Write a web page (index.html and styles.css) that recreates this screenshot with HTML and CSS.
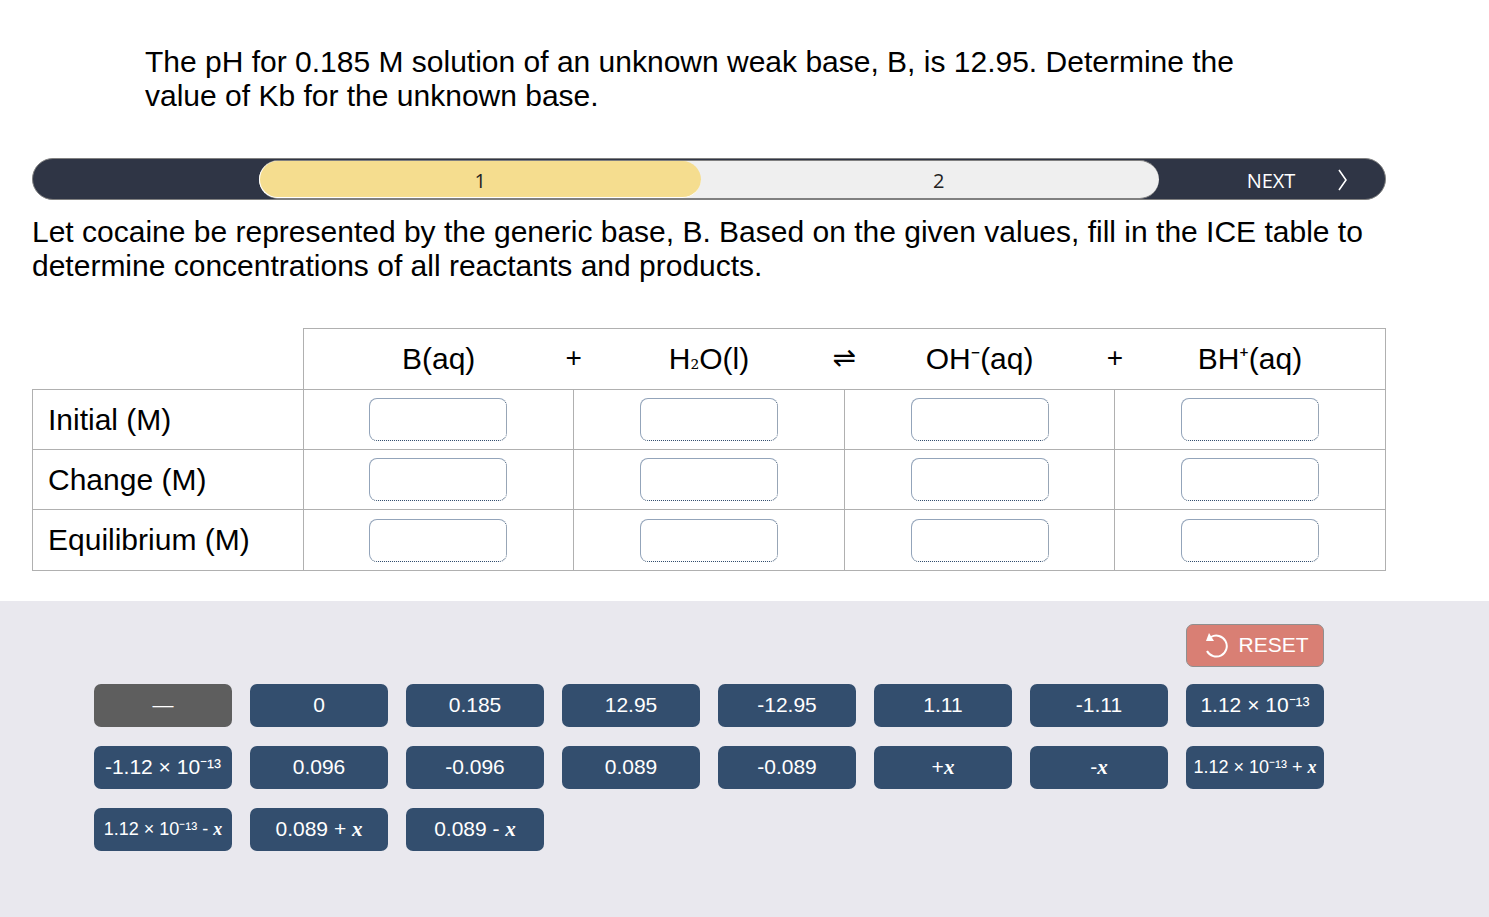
FILE: index.html
```html
<!DOCTYPE html>
<html lang="en">
<head>
  <meta charset="UTF-8">
  <title>ICE Table</title>
  <link rel="stylesheet" href="styles.css">
</head>
<body>

  <main class="problem">
    <p class="question">The pH for 0.185 M solution of an unknown weak base, B, is 12.95. Determine the value of Kb for the unknown base.</p>

    <nav class="progress">
      <div class="steps">
        <button class="step active" type="button">1</button>
        <button class="step" type="button">2</button>
      </div>
      <button class="next" type="button">
        NEXT
        <svg width="12" height="22" viewBox="0 0 12 22"><path d="M2 1 L9 11 L2 21" fill="none" stroke="#fff" stroke-width="1.6"/></svg>
      </button>
    </nav>

    <p class="instructions">Let cocaine be represented by the generic base, B. Based on the given values, fill in the ICE table to determine concentrations of all reactants and products.</p>

    <table class="ice">
      <thead>
        <tr>
          <td class="corner"></td>
          <th>B(aq)<span class="operator">+</span></th>
          <th>H<span class="sub">₂</span>O(l)<span class="operator arrows">⇌</span></th>
          <th>OH<span class="charge">⁻</span>(aq)<span class="operator">+</span></th>
          <th>BH<span class="charge">⁺</span>(aq)</th>
        </tr>
      </thead>
      <tbody>
        <tr>
          <th>Initial (M)</th>
          <td><input class="slot" type="text" aria-label="Initial B"></td>
          <td><input class="slot" type="text" aria-label="Initial H2O"></td>
          <td><input class="slot" type="text" aria-label="Initial OH-"></td>
          <td><input class="slot" type="text" aria-label="Initial BH+"></td>
        </tr>
        <tr>
          <th>Change (M)</th>
          <td><input class="slot" type="text" aria-label="Change B"></td>
          <td><input class="slot" type="text" aria-label="Change H2O"></td>
          <td><input class="slot" type="text" aria-label="Change OH-"></td>
          <td><input class="slot" type="text" aria-label="Change BH+"></td>
        </tr>
        <tr>
          <th>Equilibrium (M)</th>
          <td><input class="slot" type="text" aria-label="Equilibrium B"></td>
          <td><input class="slot" type="text" aria-label="Equilibrium H2O"></td>
          <td><input class="slot" type="text" aria-label="Equilibrium OH-"></td>
          <td><input class="slot" type="text" aria-label="Equilibrium BH+"></td>
        </tr>
      </tbody>
    </table>
  </main>

  <section class="tray">
    <div class="actions">
      <button class="tile reset" type="button">
        <svg width="24" height="26" viewBox="0 0 24 26">
          <path d="M6 5 A10.500 10.500 0 1 1 2 19" fill="none" stroke="#fff" stroke-width="2"/>
          <path d="M4 1 L9 9 L1 9 Z" fill="#fff"/>
        </svg>
        RESET
      </button>
    </div>
    <div class="tiles">
      <button class="tile blank" type="button">—</button>
      <button class="tile" type="button">0</button>
      <button class="tile" type="button">0.185</button>
      <button class="tile" type="button">12.95</button>
      <button class="tile" type="button">-12.95</button>
      <button class="tile" type="button">1.11</button>
      <button class="tile" type="button">-1.11</button>
      <button class="tile" type="button">1.12 × 10⁻¹³</button>
      <button class="tile" type="button">-1.12 × 10⁻¹³</button>
      <button class="tile" type="button">0.096</button>
      <button class="tile" type="button">-0.096</button>
      <button class="tile" type="button">0.089</button>
      <button class="tile" type="button">-0.089</button>
      <button class="tile" type="button">+<i>x</i></button>
      <button class="tile" type="button">-<i>x</i></button>
      <button class="tile small" type="button">1.12 × 10⁻¹³ + <i>x</i></button>
      <button class="tile small" type="button">1.12 × 10⁻¹³ - <i>x</i></button>
      <button class="tile" type="button">0.089 + <i>x</i></button>
      <button class="tile" type="button">0.089 - <i>x</i></button>
    </div>
  </section>

</body>
</html>
```

FILE: styles.css
```css
* {
  box-sizing: border-box;
}

body {
  margin: 0;
  min-height: 100vh;
  display: flex;
  flex-direction: column;
  font-family: Arial, "Liberation Sans", sans-serif;
  font-size: 30px;
  line-height: 34px;
  color: #000;
  background-color: #fff;
}

button {
  font-family: inherit;
  cursor: pointer;
}

.problem {
  padding: 45px 103px 30px 32px;
}

.question {
  margin: 0 113px 45px;
}

.progress {
  display: grid;
  grid-template-columns: 226px 1fr 226px;
  height: 42px;
  border: 1px solid #808080;
  border-radius: 21px;
  background-color: #2f3545;
  overflow: hidden;
}

.steps {
  grid-column: 2;
  display: flex;
  gap: 18px;
  margin-top: 1px;
  border: 1px solid #808080;
  border-width: 1px 0;
  border-radius: 20px;
  background-color: #efefef;
}

.step,
.next {
  border: none;
  padding: 2px 0 0;
  font-family: "Open Sans", sans-serif;
  font-size: 20px;
  background: none;
}

.step {
  flex: 1;
  border-radius: 19px;
  color: #222;
}

.step.active {
  border: 1px solid #fff;
  border-width: 0 0 1px 1px;
  background-color: #f5dd8f;
}

.next {
  display: flex;
  align-items: center;
  justify-content: center;
  gap: 42px;
  padding-left: 52px;
  font-weight: 500;
  color: #fff;
}

.instructions {
  margin: 15px 0 45px;
}

.ice {
  width: 100%;
  table-layout: fixed;
  border-collapse: collapse;
}

.ice tr {
  height: 60px;
}

.ice thead tr,
.ice tr:last-child {
  height: 61px;
}

.ice th {
  position: relative;
  padding: 0;
  font-weight: normal;
  border: 1px solid #b0b0b0;
}

.ice td {
  padding: 0;
  text-align: center;
  border: 1px solid #b0b0b0;
}

.ice .corner {
  border-top: none;
  border-left: none;
}

.ice thead th {
  border-left: none;
  border-right: none;
}

.ice thead th:last-child {
  border-right: 1px solid #b0b0b0;
}

.ice tbody th {
  padding-left: 15px;
  text-align: left;
}

/* reaction signs sit on the line between two columns */
.operator {
  position: absolute;
  top: 12px;
  right: -20px;
  width: 40px;
  z-index: 1;
  font-size: 28px;
}

.arrows {
  font-family: "DejaVu Sans", sans-serif;
}

.sub {
  font-family: "DejaVu Serif", serif;
  font-size: 22px;
  line-height: 0;
}

.charge {
  font-family: "Noto Sans", sans-serif;
  font-size: 28px;
  line-height: 0;
}

.slot {
  display: block;
  width: 138px;
  height: 43px;
  margin: 0 auto;
  border: 1px dotted #334e6e;
  border-top: 1px solid #93a4ba;
  border-left: 1px solid #93a4ba;
  border-radius: 8px;
  font-size: 20px;
  text-align: center;
  background-color: #fff;
}

.tray {
  flex: 1;
  padding: 23px 165px 23px 94px;
  background-color: #e9e8ee;
}

.actions {
  display: flex;
  justify-content: flex-end;
  margin-bottom: 17px;
}

.tiles {
  display: grid;
  grid-template-columns: repeat(8, 1fr);
  gap: 19px 18px;
}

.tile {
  height: 43px;
  padding: 0 0 2px;
  border: none;
  border-radius: 7px;
  font-size: 21px;
  line-height: 24px;
  white-space: nowrap;
  color: #fff;
  background-color: #334e6e;
}

.tile i {
  font-family: "Liberation Serif", serif;
  font-weight: bold;
}

.tile.small {
  font-size: 18px;
}

.blank {
  background-color: #5e5e5e;
}

.reset {
  width: 138px;
  display: flex;
  align-items: center;
  justify-content: center;
  gap: 9px;
  padding-left: 4px;
  border: 1px solid #8f8f8f;
  background-color: #d97f74;
}
```
